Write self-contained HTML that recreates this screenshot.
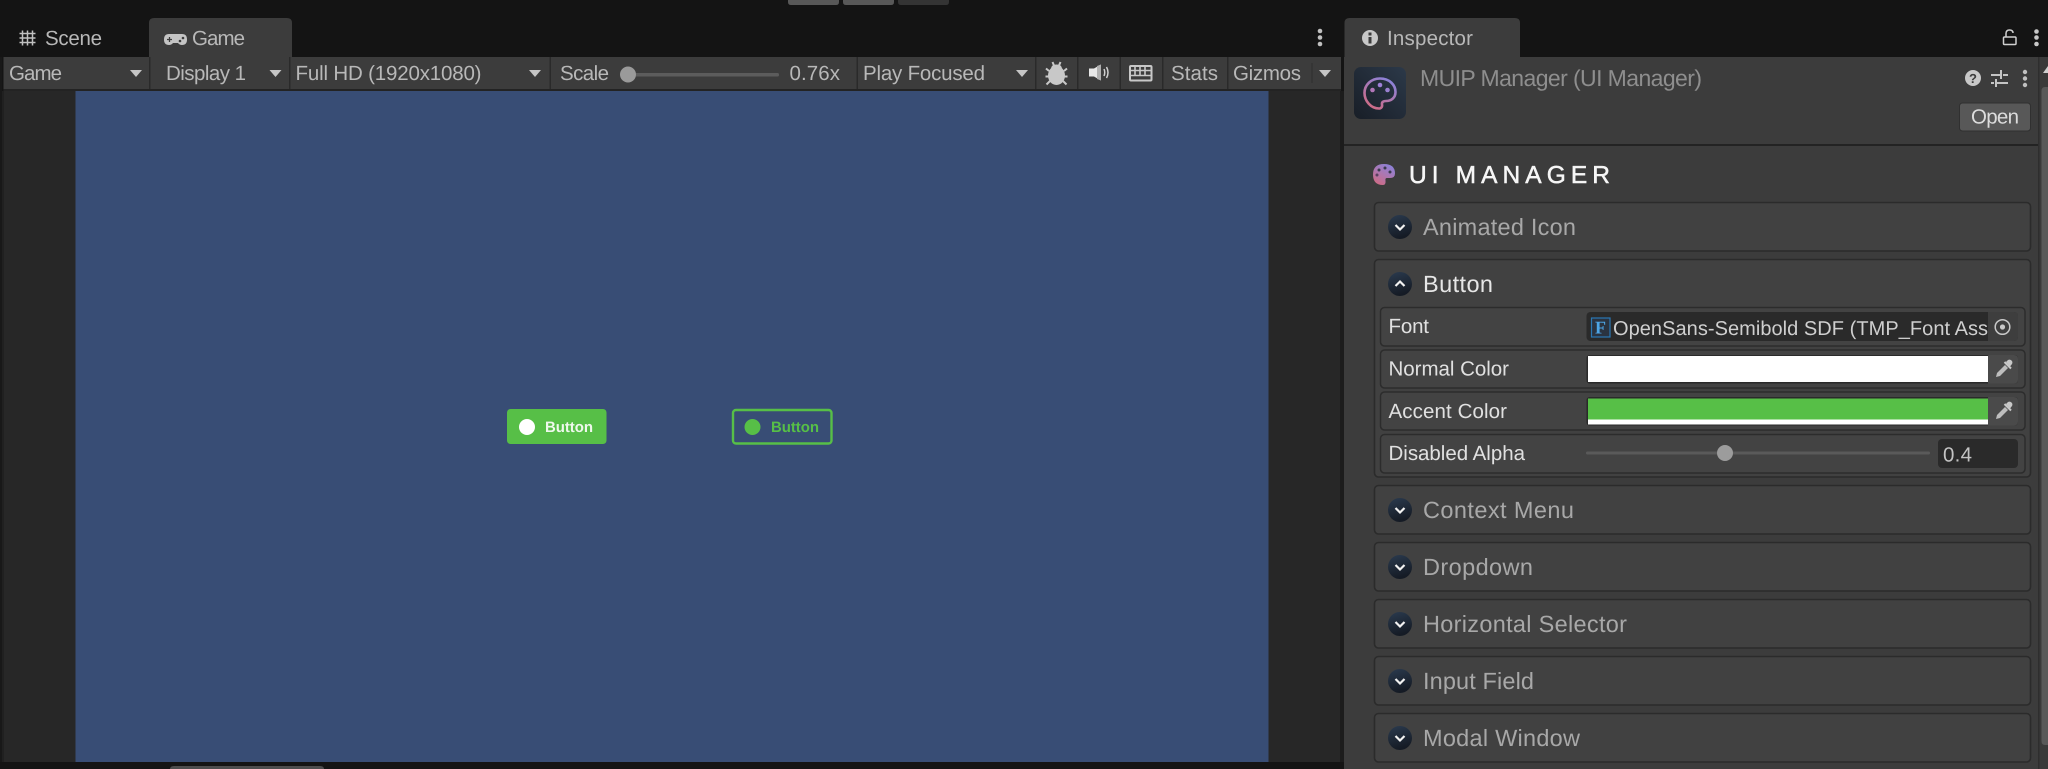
<!DOCTYPE html>
<html lang="en">
<head>
<meta charset="utf-8">
<title>Unity Editor - MUIP Manager</title>
<style>
html,body{margin:0;padding:0;width:2048px;height:769px;overflow:hidden;background:#141414}
svg{display:block;position:absolute;left:0;top:0}
text{font-family:"Liberation Sans",sans-serif;text-rendering:geometricPrecision}
.t{font-size:20.5px;fill:#b8b8b8}
.s{font-size:23.5px;fill:#a8a8a8}
.l{font-size:20.5px;fill:#e0e0e0}
</style>
</head>
<body>
<svg width="2048" height="769" viewBox="0 0 2048 769" xmlns="http://www.w3.org/2000/svg">
<defs>
<linearGradient id="cg" x1="0" y1="0" x2="0.3" y2="1"><stop offset="0" stop-color="#2b3b4f"/><stop offset="1" stop-color="#151b25"/></linearGradient>
<linearGradient id="ig" x1="1" y1="0" x2="0" y2="1"><stop offset="0" stop-color="#2c3949"/><stop offset="1" stop-color="#181e27"/></linearGradient>
<linearGradient id="pg" x1="0.8" y1="0" x2="0.2" y2="1"><stop offset="0" stop-color="#8a83dc"/><stop offset="1" stop-color="#cf6b84"/></linearGradient>
<g id="down"><circle r="12" fill="url(#cg)"/><path d="M-4.500 -2L0 2.500L4.500 -2" fill="none" stroke="#f2f2f2" stroke-width="2.200"/></g>
<g id="up"><circle r="12" fill="url(#cg)"/><path d="M-4.500 2L0 -2.500L4.500 2" fill="none" stroke="#f2f2f2" stroke-width="2.200"/></g>
<g id="drop"><path d="M0 16.500L1 12.500L9 4.500L12 7.500L4 15.500Z" fill="#bdbdbd"/><path d="M8.500 1.500L15 8" stroke="#c8c8c8" stroke-width="2"/><path d="M10 1.500L12 -0.500Q14 -1.500 15.500 0Q17 1.500 16 3.500L14 6Z" fill="#c8c8c8"/></g>
</defs>

<!-- background -->
<rect width="2048" height="769" fill="#141414"/>
<!-- top center tabs -->
<path d="M788 0H839V2Q839 5 836 5H791Q788 5 788 2Z" fill="#585858"/>
<path d="M843 0H894V2Q894 5 891 5H846Q843 5 843 2Z" fill="#585858"/>
<path d="M898 0H949V2Q949 5 946 5H901Q898 5 898 2Z" fill="#343434"/>

<!-- game view -->
<rect x="0" y="57" width="2" height="705" fill="#181818"/>
<rect x="2" y="91" width="1338" height="671" fill="#272727"/>
<rect x="2" y="91" width="2" height="671" fill="#202020"/>
<rect x="75.500" y="91" width="1193" height="671" fill="#384d75"/>
<rect x="1340" y="91" width="4" height="671" fill="#1c1c1c"/>
<path d="M170 769Q170 766 174 766H320Q324 766 324 769Z" fill="#4d4d4d"/>

<!-- scene tabs -->
<path d="M149 57V23Q149 18 154 18H287Q292 18 292 23V57Z" fill="#3c3c3c"/>
<path d="M22.500 30.500V45.500M27.500 30.500V45.500M32.500 30.500V45.500M19.500 33.500H35.500M19.500 38H35.500M19.500 42.500H35.500" stroke="#c0c0c0" stroke-width="1.500" fill="none"/>
<text class="t" x="45" y="45" textLength="57" lengthAdjust="spacing">Scene</text>
<path d="M169 34H182Q187 34 187 39.500Q187 45 182 45Q179.500 45 178 43H173Q171.500 45 169 45Q164 45 164 39.500Q164 34 169 34Z" fill="#c4c4c4"/>
<path d="M167 39.500H172M169.500 37V42" stroke="#3c3c3c" stroke-width="1.300"/><circle cx="180" cy="41" r="1.300" fill="#3c3c3c"/><circle cx="183" cy="38" r="1.300" fill="#3c3c3c"/>
<text class="t" x="192" y="45" textLength="53" lengthAdjust="spacing">Game</text>
<g fill="#c0c0c0"><circle cx="1320" cy="31" r="2.300"/><circle cx="1320" cy="37.500" r="2.300"/><circle cx="1320" cy="44" r="2.300"/></g>

<!-- toolbar -->
<rect x="3.500" y="57" width="1337.500" height="32" fill="#3c3c3c"/>
<rect x="3.500" y="89" width="1337.500" height="2" fill="#232323"/>
<g fill="#2a2a2a">
<rect x="149" y="57" width="1.500" height="32"/><rect x="289" y="57" width="1.500" height="32"/><rect x="549.500" y="57" width="1.500" height="32"/><rect x="856.500" y="57" width="1.500" height="32"/><rect x="1035" y="57" width="1.500" height="32"/><rect x="1077" y="57" width="1.500" height="32"/><rect x="1119.500" y="57" width="1.500" height="32"/><rect x="1162" y="57" width="1.500" height="32"/><rect x="1227" y="57" width="1.500" height="32"/>
<rect x="1311.500" y="63" width="1" height="20" fill="#2e2e2e"/>
</g>
<text class="t" x="9" y="80" textLength="53" lengthAdjust="spacing">Game</text>
<text class="t" x="166" y="80" textLength="80" lengthAdjust="spacing">Display 1</text>
<text class="t" x="295.500" y="80" textLength="186" lengthAdjust="spacing">Full HD (1920x1080)</text>
<text class="t" x="560" y="80" textLength="49" lengthAdjust="spacing">Scale</text>
<text class="t" x="789.500" y="80" textLength="50.500" lengthAdjust="spacing">0.76x</text>
<text class="t" x="863" y="80" textLength="122" lengthAdjust="spacing">Play Focused</text>
<text class="t" x="1171" y="80" textLength="47" lengthAdjust="spacing">Stats</text>
<text class="t" x="1233" y="80" textLength="68" lengthAdjust="spacing">Gizmos</text>
<g fill="#c6c6c6">
<path d="M130 70H142L136 77Z"/><path d="M269.500 70H281.500L275.500 77Z"/><path d="M529 70H541L535 77Z"/><path d="M1016 70H1028L1022 77Z"/><path d="M1319 70H1331L1325 77Z"/>
</g>
<rect x="628" y="73" width="151" height="3.500" rx="1.500" fill="#5c5c5c"/>
<circle cx="628" cy="74.500" r="8" fill="#9a9a9a"/>

<!-- bug -->
<g fill="#c8c8c8">
<ellipse cx="1056.500" cy="75.500" rx="8.500" ry="9.500"/>
<path d="M1051 69Q1051 64.500 1056.500 64.500Q1062 64.500 1062 69Z"/>
<path d="M1052.500 62L1054 65.500M1060.500 62L1059 65.500M1049 71L1046 68.500M1064 71L1067 68.500M1048.500 76.500H1045.500M1064.500 76.500H1067.500M1050 81L1046.500 84.500M1063 81L1066.500 84.500" stroke="#c8c8c8" stroke-width="2" fill="none"/>
</g>
<!-- speaker -->
<path d="M1089 68.500H1094L1101 64.500V80.500L1094 76.500H1089Z" fill="#e8e8e8"/>
<path d="M1097 66V79L1101 80.500V64.500Z" fill="#b0b0b0"/>
<path d="M1104 69Q1105.500 72.500 1104 76M1106.500 67Q1109.500 72.500 1106.500 78" stroke="#d0d0d0" stroke-width="1.500" fill="none"/>
<!-- keyboard -->
<rect x="1130" y="66" width="21.500" height="14.500" rx="1" fill="none" stroke="#c8c8c8" stroke-width="2"/>
<path d="M1130 70.500H1151M1130 75.500H1151M1135 66V75.500M1140 66V75.500M1145 66V75.500" stroke="#c8c8c8" stroke-width="1.600" fill="none"/>

<!-- inspector -->
<path d="M1344.500 57V23Q1344.500 18 1349.500 18H1515Q1520 18 1520 23V57Z" fill="#3c3c3c"/>
<rect x="1344" y="57" width="704" height="712" fill="#3c3c3c"/>
<circle cx="1370" cy="38" r="8" fill="#c8c8c8"/>
<rect x="1368.500" y="37" width="3" height="6.500" fill="#3c3c3c"/><rect x="1368.500" y="32.500" width="3" height="3" fill="#3c3c3c"/>
<text class="t" x="1387" y="45" textLength="86" lengthAdjust="spacing">Inspector</text>
<path d="M2006 36.500V33.500Q2006 30 2009.500 30Q2013 30 2013 33" fill="none" stroke="#d0d0d0" stroke-width="1.500"/>
<rect x="2003.500" y="37" width="12.500" height="7.500" rx="1" fill="none" stroke="#d0d0d0" stroke-width="1.500"/>
<g fill="#c8c8c8"><circle cx="2036.500" cy="31.500" r="2.300"/><circle cx="2036.500" cy="37.500" r="2.300"/><circle cx="2036.500" cy="44" r="2.300"/></g>

<!-- header -->
<rect x="1354" y="67" width="52" height="52" rx="7" fill="url(#ig)"/>
<path d="M1380 78.500C1389.500 78.500 1395.500 85 1395.500 92C1395.500 98 1391 101 1386 101C1383.500 101 1381.500 102 1382 104.500C1382.500 107 1381 108.500 1379 108.500C1371 108.500 1364.500 101 1364.500 93C1364.500 85 1371 78.500 1380 78.500Z" fill="none" stroke="url(#pg)" stroke-width="2.600"/>
<circle cx="1372.500" cy="90" r="2.300" fill="#b076b8"/>
<circle cx="1380" cy="85" r="2.300" fill="#9f80d8"/>
<circle cx="1387.500" cy="90" r="2.300" fill="#9a80d0"/>
<text x="1420" y="86" font-size="23" fill="#8e8e8e" textLength="282" lengthAdjust="spacing">MUIP Manager (UI Manager)</text>
<circle cx="1973" cy="78" r="8" fill="#c8c8c8"/>
<text x="1973" y="83" font-size="13" font-weight="700" fill="#3c3c3c" text-anchor="middle">?</text>
<path d="M1991 75H2000M2003 75H2008M2001 70V79M1991 83H1994M1997 83H2008M1996 79V87" stroke="#c4c4c4" stroke-width="2" fill="none"/>
<g fill="#c0c0c0"><circle cx="2025" cy="72" r="2.200"/><circle cx="2025" cy="78.500" r="2.200"/><circle cx="2025" cy="85" r="2.200"/></g>
<rect x="1959.500" y="103" width="71" height="28" rx="3" fill="#585858" stroke="#303030" stroke-width="1"/>
<text x="1971" y="123.500" font-size="20.500" fill="#dcdcdc" textLength="48" lengthAdjust="spacing">Open</text>
<rect x="1344" y="144" width="694" height="2" fill="#232323"/>

<!-- UI manager title -->
<path d="M1384 164Q1395 164 1395 173.500Q1395 178 1390 178H1387Q1385 178 1385.500 180.500Q1386 185 1383 185Q1373 185 1373 174.500Q1373 164 1384 164Z" fill="url(#pg)"/>
<circle cx="1379" cy="170" r="1.500" fill="#3b3b4e"/><circle cx="1385" cy="168" r="1.500" fill="#3b3b4e"/><circle cx="1390" cy="172" r="1.500" fill="#3b3b4e"/><circle cx="1377" cy="175" r="1.500" fill="#5b4060"/>
<text x="1409" y="183" font-size="24.500" fill="#f6f6f6" stroke="#f6f6f6" stroke-width="0.500" textLength="201" lengthAdjust="spacing">UI MANAGER</text>

<!-- scrollbar -->
<rect x="2038" y="57" width="1.500" height="712" fill="#2e2e2e"/>
<rect x="2039.500" y="57" width="8.500" height="712" fill="#3a3a3a"/>
<path d="M2043 73L2048 66V73Z" fill="#cfcfcf"/>
<path d="M2048 87H2045Q2041.500 87 2041.500 91V741Q2041.500 745 2045 745H2048Z" fill="#595959"/>

<!-- sections -->
<g fill="#414141" stroke="#2b2b2b" stroke-width="1.600">
<rect x="1374.500" y="202.500" width="656" height="48.500" rx="4"/>
<rect x="1374.500" y="259.500" width="656" height="217.500" rx="4"/>
<rect x="1374.500" y="485.500" width="656" height="48.500" rx="4"/>
<rect x="1374.500" y="542.500" width="656" height="48.500" rx="4"/>
<rect x="1374.500" y="599.500" width="656" height="48.500" rx="4"/>
<rect x="1374.500" y="656.500" width="656" height="48.500" rx="4"/>
<rect x="1374.500" y="713.500" width="656" height="48.500" rx="4"/>
</g>
<use href="#down" x="1400" y="227"/>
<use href="#up" x="1400" y="284"/>
<use href="#down" x="1400" y="510"/>
<use href="#down" x="1400" y="567"/>
<use href="#down" x="1400" y="624"/>
<use href="#down" x="1400" y="681"/>
<use href="#down" x="1400" y="738"/>
<text class="s" x="1423" y="235" textLength="153" lengthAdjust="spacing">Animated Icon</text>
<text class="s" x="1423" y="292" textLength="70" lengthAdjust="spacing" style="fill:#e6e6e6">Button</text>
<text class="s" x="1423" y="518" textLength="151" lengthAdjust="spacing">Context Menu</text>
<text class="s" x="1423" y="575" textLength="110" lengthAdjust="spacing">Dropdown</text>
<text class="s" x="1423" y="632" textLength="204" lengthAdjust="spacing">Horizontal Selector</text>
<text class="s" x="1423" y="689" textLength="111" lengthAdjust="spacing">Input Field</text>
<text class="s" x="1423" y="746" textLength="157" lengthAdjust="spacing">Modal Window</text>

<!-- rows -->
<g fill="#434343" stroke="#2c2c2c" stroke-width="1.500">
<rect x="1380.500" y="307.500" width="644.500" height="38.500" rx="4"/>
<rect x="1380.500" y="350" width="644.500" height="38" rx="4"/>
<rect x="1380.500" y="392" width="644.500" height="38" rx="4"/>
<rect x="1380.500" y="434.500" width="644.500" height="38.500" rx="4"/>
</g>
<text class="l" x="1388.500" y="333" textLength="40.500" lengthAdjust="spacing">Font</text>
<text class="l" x="1388.500" y="375.500" textLength="120.500" lengthAdjust="spacing">Normal Color</text>
<text class="l" x="1388.500" y="418" textLength="118.500" lengthAdjust="spacing">Accent Color</text>
<text class="l" x="1388.500" y="460" textLength="136.500" lengthAdjust="spacing">Disabled Alpha</text>

<!-- font field -->
<rect x="1586.500" y="312" width="431.500" height="29" rx="4" fill="#2a2a2a"/>
<rect x="1591.500" y="318" width="18.500" height="19" fill="#2a3340" stroke="#2b78b4" stroke-width="1.200"/>
<text x="1595" y="333.500" font-size="18" font-weight="700" fill="#4ea6e6" style="font-family:'Liberation Serif',serif">F</text>
<text x="1613" y="335" font-size="20" fill="#cfcfcf" textLength="375" lengthAdjust="spacing">OpenSans-Semibold SDF (TMP_Font Ass</text>
<path d="M1988 312H2014Q2018 312 2018 316V337Q2018 341 2014 341H1988Z" fill="#3e3e3e"/>
<circle cx="2002.500" cy="327" r="7.300" fill="none" stroke="#c8c8c8" stroke-width="1.500"/>
<circle cx="2002.500" cy="327" r="2.600" fill="#c8c8c8"/>

<!-- normal color -->
<rect x="1586.500" y="355" width="431.500" height="28.500" rx="3" fill="#2a2a2a"/>
<rect x="1588" y="356" width="400" height="26" fill="#fff"/>
<path d="M1988 355H2014Q2018 355 2018 359V379.500Q2018 383.500 2014 383.500H1988Z" fill="#4a4a4a"/>
<use href="#drop" x="1996" y="360.500"/>

<!-- accent color -->
<rect x="1586.500" y="397" width="431.500" height="28.500" rx="3" fill="#2a2a2a"/>
<rect x="1588" y="398.500" width="400" height="21" fill="#57bf47"/>
<rect x="1588" y="419.500" width="400" height="5" fill="#fff"/>
<path d="M1988 397H2014Q2018 397 2018 401V421.500Q2018 425.500 2014 425.500H1988Z" fill="#4a4a4a"/>
<use href="#drop" x="1996" y="402.500"/>

<!-- alpha slider -->
<rect x="1586" y="451.500" width="344" height="3" rx="1.500" fill="#5a5a5a"/>
<circle cx="1725" cy="453" r="8" fill="#9c9c9c"/>
<rect x="1938" y="439" width="80" height="29" rx="4" fill="#2a2a2a"/>
<text x="1943" y="461.500" font-size="20.500" fill="#c4c4c4" textLength="29" lengthAdjust="spacing">0.4</text>

<!-- game buttons -->
<rect x="507" y="409" width="99.500" height="35" rx="3.500" fill="#57bf47"/>
<circle cx="527" cy="427" r="8" fill="#fff"/>
<text x="545" y="432" font-size="15" font-weight="700" fill="#eef8ec" textLength="48" lengthAdjust="spacing">Button</text>
<rect x="733" y="410" width="98.500" height="33.500" rx="3" fill="none" stroke="#57bf47" stroke-width="2.400"/>
<circle cx="752.500" cy="427" r="8" fill="#57bf47"/>
<text x="771" y="432" font-size="15" font-weight="700" fill="#57bf47" textLength="48" lengthAdjust="spacing">Button</text>
</svg>
</body>
</html>
